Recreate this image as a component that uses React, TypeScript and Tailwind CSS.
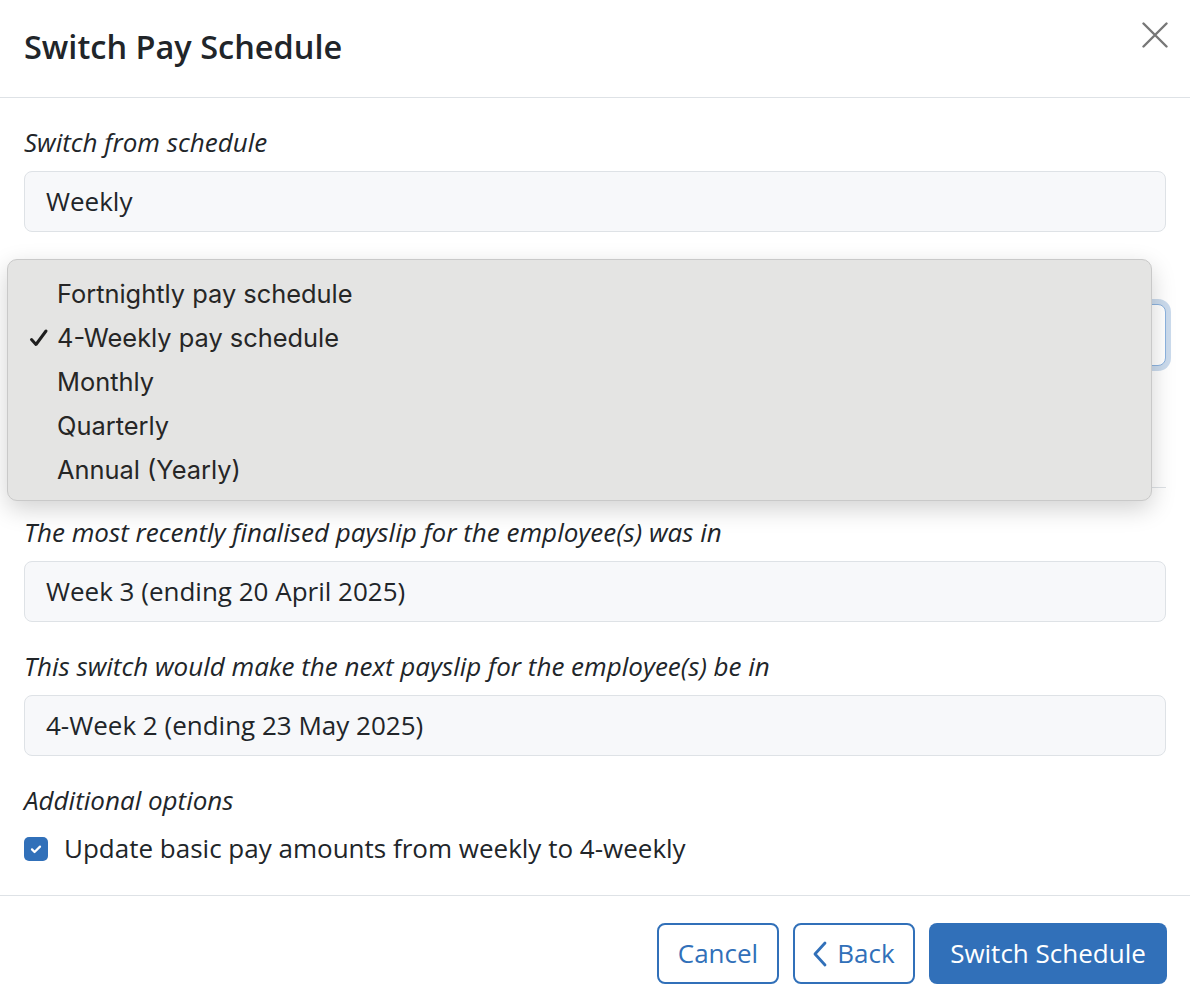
const scheduleOptions = [
  { label: 'Fortnightly pay schedule', selected: false },
  { label: '4-Weekly pay schedule', selected: true },
  { label: 'Monthly', selected: false },
  { label: 'Quarterly', selected: false },
  { label: 'Annual (Yearly)', selected: false },
];

function Label({ children }: { children: React.ReactNode }) {
  return <div className="italic text-[26px] leading-[33px] mb-[12px] text-[#212529]">{children}</div>;
}

function ReadOnlyField({ value }: { value: string }) {
  return (
    <div className="h-[61px] flex items-center px-[21px] bg-[#f7f8fa] border border-[#dee2e6] rounded-[8px] text-[26px] text-[#212529]">
      {value}
    </div>
  );
}

// native select popup, drawn open over the "switch to" field
function SchedulePopup() {
  return (
    <div
      className="absolute left-[-17px] top-0 w-[1145px] bg-[#e4e4e3] border border-[#c9c9c9] rounded-[10px] pt-[12px] pb-[8px] shadow-[0_8px_24px_rgba(0,0,0,0.18)] z-10"
      style={{ fontFamily: 'Inter, "Liberation Sans", sans-serif' }}
    >
      {scheduleOptions.map((opt) => (
        <div key={opt.label} className="h-[44px] flex items-center text-[25.4px] text-[#262626]">
          <div className="w-[49px] flex justify-end pr-[8px]">
            {opt.selected && (
              <svg viewBox="0 0 20 20" className="w-[20px] h-[20px]" fill="none" stroke="#1f1f1f" strokeLinecap="round" strokeLinejoin="round">
                <path d="M2.5 11.5l4.5 5L17 3" strokeWidth="3" />
              </svg>
            )}
          </div>
          <span>{opt.label}</span>
        </div>
      ))}
    </div>
  );
}

export default function App() {
  return (
    <div className="min-h-screen bg-white text-[#212529]" style={{ fontFamily: '"Open Sans", "Noto Sans", sans-serif' }}>
      {/* header */}
      <div className="h-[97px] border-b border-[#dee2e6] flex items-center justify-between pl-[24px] pr-[22px] box-content">
        <h2 className="text-[32.5px] font-semibold leading-none -mt-[3px]">Switch Pay Schedule</h2>
        <button className="self-start mt-[22px] w-[26px] h-[26px] text-[#777]">
          <svg viewBox="0 0 26 26" className="w-[26px] h-[26px]" stroke="currentColor" strokeWidth="2.4" strokeLinecap="round">
            <path d="M1.5 1.5l23 23M24.5 1.5l-23 23" />
          </svg>
        </button>
      </div>

      {/* body */}
      <div className="px-[24px] pt-[28px] pb-[30px]">
        <Label>Switch from schedule</Label>
        <ReadOnlyField value="Weekly" />

        <div className="relative mt-[27px]">
          <Label>Switch to schedule</Label>
          <div className="h-[62px] flex items-center px-[21px] bg-white border border-[#8cb3df] rounded-[8px] text-[26px] ring-[5px] ring-[#3170b9]/25">
            4-Weekly pay schedule
          </div>
          <SchedulePopup />
        </div>

        <div className="h-[121px]" />
        <hr className="border-0 border-t border-[#dee2e6]" />

        <div className="mt-[28px]">
          <Label>The most recently finalised payslip for the employee(s) was in</Label>
          <ReadOnlyField value="Week 3 (ending 20 April 2025)" />
        </div>

        <div className="mt-[28px]">
          <Label>This switch would make the next payslip for the employee(s) be in</Label>
          <ReadOnlyField value="4-Week 2 (ending 23 May 2025)" />
        </div>

        <div className="mt-[28px]">
          <div className="italic text-[26px] leading-[33px] mb-[15px]">Additional options</div>
          <label className="flex items-center gap-[16px] text-[26px] leading-[33px]">
            <span className="w-[24px] h-[24px] rounded-[5px] bg-[#3170b9] flex items-center justify-center text-white">
              <svg viewBox="0 0 20 20" className="w-[16px] h-[16px]" fill="none" stroke="currentColor" strokeLinecap="round" strokeLinejoin="round">
                <path d="M5 10.5l3.2 3.2L15 7" strokeWidth="2.8" />
              </svg>
            </span>
            Update basic pay amounts from weekly to 4-weekly
          </label>
        </div>
      </div>

      {/* footer */}
      <div className="border-t border-[#dee2e6] flex justify-end gap-[14px] px-[23px] pt-[27px] pb-[22px]">
        <button className="h-[61px] w-[122px] rounded-[8px] border-2 border-[#3170b9] text-[#3170b9] text-[26px]">
          Cancel
        </button>
        <button className="h-[61px] w-[122px] rounded-[8px] border-2 border-[#3170b9] text-[#3170b9] text-[26px] flex items-center justify-center gap-[10px]">
          <svg viewBox="0 0 14 26" className="w-[14px] h-[26px]" fill="none" stroke="currentColor" strokeWidth="2.8" strokeLinecap="round" strokeLinejoin="round">
            <path d="M12 2L2 13l10 11" />
          </svg>
          Back
        </button>
        <button className="h-[61px] w-[238px] rounded-[8px] bg-[#3170b9] text-white text-[26px]">
          Switch Schedule
        </button>
      </div>
    </div>
  );
}
